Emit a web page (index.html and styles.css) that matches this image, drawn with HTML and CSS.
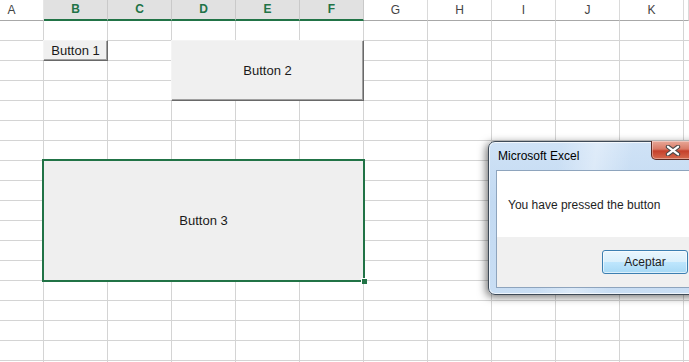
FILE: index.html
```html
<!DOCTYPE html>
<html>
<head>
<meta charset="utf-8">
<link rel="stylesheet" href="styles.css">
</head>
<body>
<div class="sheet">
  <div class="col-head col-a">A</div>
  <div class="col-head sel">B</div>
  <div class="col-head sel">C</div>
  <div class="col-head sel">D</div>
  <div class="col-head sel">E</div>
  <div class="col-head sel">F</div>
  <div class="col-head">G</div>
  <div class="col-head">H</div>
  <div class="col-head">I</div>
  <div class="col-head">J</div>
  <div class="col-head">K</div>
  <div class="col-head"></div>
  <div class="cells"></div>
  <div class="xl-btn btn1">Button 1</div>
  <div class="xl-btn btn2">Button 2</div>
  <div class="xl-btn btn3">Button 3</div>
</div>

<div class="dialog">
  <div class="dlg-title">Microsoft Excel</div>
  <div class="dlg-close">
    <svg width="16" height="11" viewBox="0 0 16 11">
      <path d="M3 1.8 L13 9.2 M13 1.8 L3 9.2" stroke="#4a4a4a" stroke-width="4.4" stroke-linecap="round"/>
      <path d="M3 1.8 L13 9.2 M13 1.8 L3 9.2" stroke="#ffffff" stroke-width="2.3" stroke-linecap="round"/>
    </svg>
  </div>
  <div class="dlg-client">
    <div class="dlg-msg">You have pressed the button</div>
    <div class="dlg-foot">
      <div class="dlg-ok">Aceptar</div>
    </div>
  </div>
</div>
</body>
</html>
```

FILE: styles.css
```css
html, body {
  margin: 0;
  padding: 0;
  background: #ffffff;
  overflow: hidden;
}

body {
  width: 689px;
  height: 362px;
  position: relative;
  font-family: "Liberation Sans", Arial, sans-serif;
}

.sheet {
  display: grid;
  grid-template-columns: 44px repeat(10, 64px) 1fr;
  grid-template-rows: 21px repeat(17, 20px) 1fr;
  height: 362px;
}

.col-head {
  grid-row: 1;
  box-sizing: border-box;
  border-right: 1px solid #dadada;
  border-bottom: 1px solid #a8a8a8;
  background: #ffffff;
  color: #444444;
  font-size: 12px;
  line-height: 20px;
  text-align: center;
}

.col-head.col-a {
  border-right-color: #e6e6e6;
  padding-right: 20px;
}

.col-head.sel {
  background: #e1e1e1;
  border-right-color: #c9c9c9;
  border-bottom: 2px solid #217346;
  color: #217346;
  font-weight: bold;
  line-height: 19px;
}

.cells {
  grid-row: 2 / -1;
  grid-column: 1 / -1;
  background-image:
    linear-gradient(to left, #d4d4d4 1px, transparent 1px),
    linear-gradient(to top, #d4d4d4 1px, transparent 1px);
  background-size: 64px 100%, 100% 20px;
  background-position: 44px 0, 0 0;
}

.xl-btn {
  margin: -1px 0 0 -1px;
  box-sizing: border-box;
  background: #f0f0f0;
  border-top: 1px solid #f4f4f4;
  border-left: 1px solid #f4f4f4;
  border-right: 1px solid #696969;
  border-bottom: 1px solid #696969;
  box-shadow: inset -1px -1px 0 #a0a0a0;
  color: #1a1a1a;
  font-size: 13px;
  display: flex;
  align-items: center;
  justify-content: center;
}

.btn1 {
  grid-column: 2 / 3;
  grid-row: 3 / 4;
}

.btn2 {
  grid-column: 4 / 7;
  grid-row: 3 / 6;
}

.btn3 {
  grid-column: 2 / 7;
  grid-row: 9 / 15;
  position: relative;
  background: #efefef;
  border: 1px solid #217346;
  box-shadow: 0 0 0 1px #217346;
}

.btn3::after {
  content: "";
  position: absolute;
  right: -4px;
  bottom: -4px;
  width: 5px;
  height: 5px;
  background: #217346;
  border-left: 1px solid #ffffff;
  border-top: 1px solid #ffffff;
}

/* dialog */
.dialog {
  position: absolute;
  left: 488px;
  top: 141px;
  width: 218px;
  height: 154px;
  box-sizing: border-box;
  border: 1px solid #3e4a57;
  border-radius: 7px;
  background:
    linear-gradient(100deg, rgba(255,255,255,0) 30%, rgba(255,255,255,0.35) 45%, rgba(255,255,255,0) 60%),
    linear-gradient(to bottom, #cfe2f6 0%, #c3daf2 40%, #c9def4 100%);
  box-shadow: inset 0 0 0 1px rgba(255,255,255,0.7), -2px 2px 8px rgba(0,0,0,0.55);
  display: flex;
  flex-direction: column;
  padding: 0 7px 6px 7px;
}

.dlg-title {
  height: 28px;
  line-height: 28px;
  padding-left: 2px;
  font-size: 12px;
  color: #000000;
}

.dlg-close {
  position: absolute;
  left: 162px;
  top: -1px;
  width: 44px;
  height: 19px;
  box-sizing: border-box;
  border: 1px solid #5b2a22;
  border-top: none;
  border-radius: 0 0 5px 5px;
  background: linear-gradient(to bottom, #e8a898 0%, #d87a66 45%, #c5402a 55%, #d66a4e 100%);
  box-shadow: inset 0 0 0 1px rgba(255,255,255,0.35);
  display: flex;
  align-items: center;
  justify-content: center;
}

.dlg-client {
  flex: 1;
  display: flex;
  flex-direction: column;
  border: 1px solid #8ea4bd;
  background: #ffffff;
}

.dlg-msg {
  height: 66px;
  box-sizing: border-box;
  padding: 27px 0 0 11px;
  font-size: 12px;
  color: #1e1e1e;
}

.dlg-foot {
  flex: 1;
  background: #f0f0f0;
  display: flex;
  justify-content: flex-end;
  align-items: flex-start;
  padding: 13px 9px 0 0;
}

.dlg-ok {
  width: 86px;
  height: 24px;
  box-sizing: border-box;
  border: 1px solid #3c7fb1;
  border-radius: 3px;
  background: linear-gradient(to bottom, #eaf6fd 0%, #d9f0fc 50%, #bee6fd 51%, #a7d9f5 100%);
  box-shadow: inset 0 0 0 1px rgba(255,255,255,0.6);
  font-size: 12px;
  color: #1e1e1e;
  display: flex;
  align-items: center;
  justify-content: center;
}
```
